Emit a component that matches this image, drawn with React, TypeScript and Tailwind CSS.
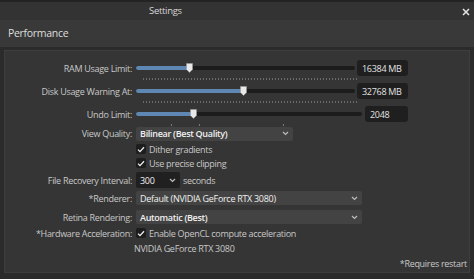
import React from 'react';

const font = { fontFamily: '"Open Sans", "Noto Sans", sans-serif' };

const Ticks: React.FC<{ width: number; dots?: boolean }> = ({ width, dots = true }) => (
    <svg width={width} height={4} className="block">
        {dots
            ? Array.from({ length: Math.floor(width / 3) }).map((_, i) => (
                  <rect key={i} x={i * 3 + 1} y={1} width={1} height={2} fill="#6b6b6b" />
              ))
            : [29, 57, 141].map((x) => <rect key={x} x={x} y={1} width={1} height={2} fill="#7a7a7a" />)}
    </svg>
);

const Thumb: React.FC = () => (
    <svg width={7} height={10} viewBox="0 0 7 10" className="absolute -top-[3px] -ml-[3px]">
        <path d="M0.5 0.5 H6.5 V6.5 L3.5 9.5 L0.5 6.5 Z" fill="#e8e8e8" stroke="#9a9a9a" strokeWidth="0.6" />
    </svg>
);

interface SliderRowProps {
    label: string;
    value: string;
    trackWidth: number;
    pos: number;
    boxWidth: number;
    dots?: boolean;
}

const SliderRow: React.FC<SliderRowProps> = ({ label, value, trackWidth, pos, boxWidth, dots = true }) => (
    <div>
        <div className="flex items-center h-4">
            <Label>{label}</Label>
            <div className="ml-[3px] relative h-[4px] rounded-sm bg-[#1c1c1c]" style={{ width: trackWidth }}>
                <div className="absolute left-0 top-0 h-full rounded-sm bg-[#5f87b3]" style={{ width: pos }} />
                <div className="absolute top-0" style={{ left: pos }}>
                    <Thumb />
                </div>
            </div>
            <div
                className="h-4 rounded-[3px] bg-[#1f1f1f] flex items-center pl-[5px] text-[#e2e2e2] whitespace-nowrap"
                style={{ width: boxWidth, marginLeft: dots ? 2 : 3 }}
            >
                {value}
            </div>
        </div>
        <div className="pl-[137px] pt-[1px] h-[7px]">
            <Ticks width={216} dots={dots} />
        </div>
    </div>
);

const Chevron: React.FC = () => (
    <svg width={7} height={5} viewBox="0 0 7 5" className="block">
        <path d="M1 1 L3.5 3.5 L6 1" fill="none" stroke="#bdbdbd" strokeWidth="1.2" />
    </svg>
);

const Select: React.FC<{ text: string; width: number; bold?: boolean }> = ({ text, width, bold = true }) => (
    <div
        className="h-[14px] rounded-[2px] bg-[#434343] flex items-center justify-between pl-[4px] pr-[4px] text-[#f0f0f0]"
        style={{ width }}
    >
        <span className={bold ? 'font-semibold' : ''}>{text}</span>
        <Chevron />
    </div>
);

const CheckBox: React.FC = () => (
    <div className="w-[10px] h-[10px] rounded-[2px] bg-[#1d1d1d] flex items-center justify-center">
        <svg width={8} height={7} viewBox="0 0 8 7">
            <path d="M1 3.6 L3 5.6 L7 1.2" fill="none" stroke="#f0f0f0" strokeWidth="1.3" />
        </svg>
    </div>
);

const Check: React.FC<{ label: string }> = ({ label }) => (
    <div className="flex items-center gap-[3px] h-[14px] pl-[131px]">
        <CheckBox />
        <span className="text-[#c8c8c8]">{label}</span>
    </div>
);

const Label: React.FC<{ children: React.ReactNode }> = ({ children }) => (
    <div className="w-[128px] text-right pr-[1px] text-[#c8c8c8] whitespace-nowrap">{children}</div>
);

const App: React.FC = () => {
    return (
        <div
            className="w-[474px] h-[279px] bg-[#2b2b2b] overflow-hidden text-[9px] tracking-[-0.3px] leading-none"
            style={font}
        >
            <div className="h-[20px] border-t-2 border-[#232323] bg-[#333333] flex items-center relative">
                <span className="pl-[149px] text-[9.5px] text-[#d6d6d6]">Settings</span>
                <svg width={8} height={8} viewBox="0 0 8 8" className="absolute right-[4px] top-[6px]">
                    <path d="M1 1 L7 7 M7 1 L1 7" stroke="#e6e6e6" strokeWidth="1.5" />
                </svg>
            </div>
            <div className="h-[27px] bg-[#393939] flex items-center pl-[8px] text-[10.5px] text-[#dedede]">Performance</div>
            <div className="h-[3px] bg-[#2b2b2b]" />
            <div className="mx-[4px] h-[223px] border border-[#3e3e3e] bg-[#353535] pt-[9px]">
                <SliderRow label="RAM Usage Limit:" value="16384 MB" trackWidth={219} pos={53} boxWidth={51} />
                <SliderRow label="Disk Usage Warning At:" value="32768 MB" trackWidth={219} pos={107} boxWidth={51} />
                <SliderRow label="Undo Limit:" value="2048" trackWidth={226} pos={57} boxWidth={43} dots={false} />
                <div className="flex items-center h-[13px] -mt-[2px]">
                    <Label>View Quality:</Label>
                    <div className="ml-[3px]">
                        <Select text="Bilinear (Best Quality)" width={157} />
                    </div>
                </div>
                <div className="mt-[2px]">
                    <Check label="Dither gradients" />
                    <Check label="Use precise clipping" />
                </div>
                <div className="flex items-center h-4 mt-[2px]">
                    <Label>File Recovery Interval:</Label>
                    <div className="ml-[3px] w-[44px] h-4 rounded-[2px] bg-[#202020] flex items-center justify-between pl-[4px] pr-[4px] text-[#f0f0f0]">
                        <span>300</span>
                        <Chevron />
                    </div>
                    <span className="ml-[3px] text-[#c8c8c8]">seconds</span>
                </div>
                <div className="flex items-center h-4 mt-[2px]">
                    <Label>*Renderer:</Label>
                    <div className="ml-[3px]">
                        <Select text="Default (NVIDIA GeForce RTX 3080)" width={226} bold={false} />
                    </div>
                </div>
                <div className="flex items-center h-4 mt-[3px]">
                    <Label>Retina Rendering:</Label>
                    <div className="ml-[3px]">
                        <Select text="Automatic (Best)" width={226} />
                    </div>
                </div>
                <div className="flex items-center h-[14px] mt-[1px]">
                    <Label>*Hardware Acceleration:</Label>
                    <div className="ml-[3px] flex items-center gap-[3px]">
                        <CheckBox />
                        <span className="text-[#c8c8c8]">Enable OpenCL compute acceleration</span>
                    </div>
                </div>
                <div className="h-[14px] mt-[1px] flex items-center pl-[129px] text-[#c8c8c8]">NVIDIA GeForce RTX 3080</div>
                <div className="h-[15px] mt-[1px] flex items-center justify-end pr-[2px] text-[#c8c8c8]">*Requires restart</div>
            </div>
        </div>
    );
};

export default App;
